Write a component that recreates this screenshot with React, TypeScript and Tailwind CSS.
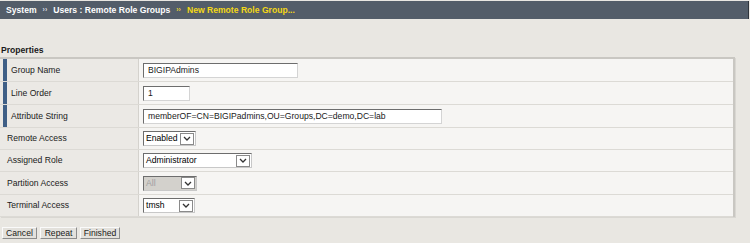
import React from "react";

const Chevron = () => (
  <span className="flex h-[12px] w-[14px] items-center justify-center border border-[#8a8a8a] bg-white">
    <svg width="8" height="5" viewBox="0 0 8 5">
      <path d="M1 1 L4 4 L7 1" fill="none" stroke="#333" strokeWidth="1.3" />
    </svg>
  </span>
);

const Select = ({ value, width, disabled }: { value: string; width: string; disabled?: boolean }) => (
  <div
    className={`flex h-[15px] items-center justify-between border border-t-[#6d6d6d] border-l-[#6d6d6d] border-r-[#c8c8c8] border-b-[#c8c8c8] pl-[2px] pr-[1px] ${width} ${disabled ? "bg-[#d3d1cc] text-[#a0a0a0]" : "bg-white text-black"}`}
  >
    <span className="leading-none">{value}</span>
    <Chevron />
  </div>
);

const Input = ({ value, width }: { value: string; width: string }) => (
  <div
    className={`flex h-[15px] items-center border border-t-[#6d6d6d] border-l-[#6d6d6d] border-r-[#d4d4d4] border-b-[#d4d4d4] bg-white pl-[4px] ${width}`}
  >
    <span className="leading-none">{value}</span>
  </div>
);

const Row = ({
  label,
  required,
  h,
  children,
}: {
  label: string;
  required?: boolean;
  h: string;
  children: React.ReactNode;
}) => (
  <div className={`flex border-b border-[#dcdad5] ${h}`}>
    <div className="flex w-[139px] shrink-0 items-center border-r border-[#d4d2cd] bg-[#ebe9e5]">
      {required ? (
        <>
          <span className="ml-[3px] h-full w-[4px] bg-[#3f5f86]" />
          <span className="ml-[4px]">{label}</span>
        </>
      ) : (
        <span className="ml-[7px]">{label}</span>
      )}
    </div>
    <div className="flex flex-1 items-center bg-[#f6f5f3] pl-[4px]">{children}</div>
  </div>
);

const Btn = ({ label, w }: { label: string; w: string }) => (
  <div
    className={`flex h-[12px] items-center justify-center border border-t-[#fafafa] border-l-[#fafafa] border-r-[#8c8c8c] border-b-[#8c8c8c] bg-[#e3e1dc] leading-none ${w}`}
  >
    {label}
  </div>
);

export default function App() {
  return (
    <div
      className="h-[243px] w-[750px] overflow-hidden bg-[#e9e7e2] pt-[1px] text-[8.6px] text-[#1a1a1a]"
      style={{ fontFamily: '"Liberation Sans", Arial, sans-serif' }}
    >
      <div className="flex h-[18px] w-[749px] items-center border-r border-[#2e343b] bg-[#535d69] pl-[6px] text-[8.6px] font-bold text-white">
        <span>System</span>
        <span className="mx-[6px] text-[7px] text-[#d8dce0]">››</span>
        <span>Users : Remote Role Groups</span>
        <span className="mx-[6px] text-[7px] text-[#e8d23a]">››</span>
        <span className="text-[#f3d816]">New Remote Role Group...</span>
      </div>

      <div className="mt-[25px] h-[13px] pl-[1px] font-bold leading-[13px]">Properties</div>

      <div className="w-[735px] border-t-2 border-r-2 border-[#c9c7c2] shadow-[1px_1px_0_#d9d7d2]">
        <Row label="Group Name" required h="h-[23px]">
          <Input value="BIGIPAdmins" width="w-[155px]" />
        </Row>
        <Row label="Line Order" required h="h-[23px]">
          <Input value="1" width="w-[47px]" />
        </Row>
        <Row label="Attribute String" required h="h-[23px]">
          <Input value="memberOF=CN=BIGIPadmins,OU=Groups,DC=demo,DC=lab" width="w-[299px]" />
        </Row>
        <Row label="Remote Access" h="h-[22px]">
          <Select value="Enabled" width="w-[53px]" />
        </Row>
        <Row label="Assigned Role" h="h-[22px]">
          <Select value="Administrator" width="w-[109px]" />
        </Row>
        <Row label="Partition Access" h="h-[23px]">
          <Select value="All" width="w-[54px]" disabled />
        </Row>
        <Row label="Terminal Access" h="h-[22px]">
          <Select value="tmsh" width="w-[52px]" />
        </Row>
      </div>

      <div className="mt-[10px] flex gap-[3px] pl-[2px]">
        <Btn label="Cancel" w="w-[35px]" />
        <Btn label="Repeat" w="w-[37px]" />
        <Btn label="Finished" w="w-[40px]" />
      </div>
    </div>
  );
}
